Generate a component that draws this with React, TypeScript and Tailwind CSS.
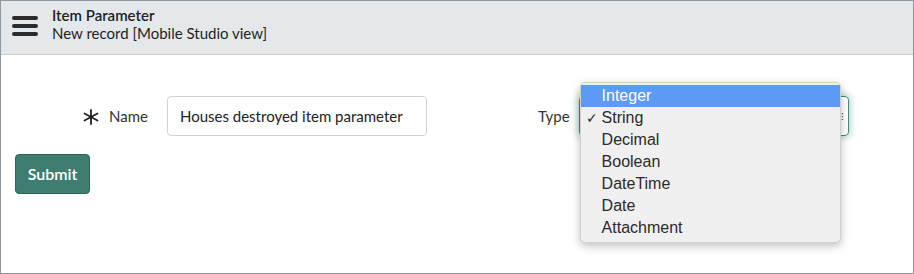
import React from "react";

const items = ["Integer", "String", "Decimal", "Boolean", "DateTime", "Date", "Attachment"];

export default function App() {
  return (
    <div className="w-[914px] h-[274px] border border-[#8f989e] bg-white flex flex-col overflow-hidden" style={{ fontFamily: "Lato, 'Open Sans', sans-serif" }}>
      <header className="h-[54px] shrink-0 bg-[#e4e8ea] border-b border-[#c9ced1] flex items-start">
        <div className="w-[26px] ml-[11px] mt-[15px] flex flex-col gap-[4px]">
          <div className="h-[4px] rounded-full bg-[#2b2b2b]" />
          <div className="h-[4px] rounded-full bg-[#2b2b2b]" />
          <div className="h-[4px] rounded-full bg-[#2b2b2b]" />
        </div>
        <div className="ml-[14px] mt-[5px] text-[#1f1f1f] leading-[18px]">
          <div className="text-[15px] font-semibold">Item Parameter</div>
          <div className="text-[15px]">New record [Mobile Studio view]</div>
        </div>
      </header>
      <main className="flex flex-col pt-[41px] pl-[14px]">
        <div className="flex items-center h-[40px]">
          <div className="w-[68px]" />
          <svg width="16" height="16" viewBox="0 0 16 16" className="mt-[2px]">
            <g stroke="#222" strokeWidth="1.8" strokeLinecap="round">
              <line x1="8" y1="1" x2="8" y2="15" />
              <line x1="1.5" y1="4.5" x2="14.5" y2="11.5" />
              <line x1="1.5" y1="11.5" x2="14.5" y2="4.5" />
            </g>
          </svg>
          <span className="ml-[10px] text-[15px] text-[#333]">Name</span>
          <div className="ml-[19px] w-[260px] h-[40px] border border-[#cfd3d6] rounded-[4px] flex items-center px-[12px] text-[15px] text-[#222] whitespace-nowrap">
            Houses destroyed item parameter
          </div>
          <span className="ml-[111px] text-[15px] text-[#333]">Type</span>
          <div className="relative ml-[9px] w-[270px] h-[40px] rounded-[4px] border border-[#3f8f7d] shadow-[0_0_6px_2px_rgba(63,143,125,0.35)] flex items-center justify-end pr-[4px]">
            <span className="text-[10px] leading-none text-[#444]">⁝</span>
            <div className="absolute left-0 top-[-15px] w-[261px] bg-[#f0f0f0] rounded-[5px] border border-[#d0d0d0] shadow-[0_3px_8px_rgba(0,0,0,0.25)] pt-[2px] pb-[3px]" style={{ fontFamily: "'Liberation Sans', Arial, sans-serif" }}>
              {items.map((it, i) => (
                <div key={it} className={`h-[22px] flex items-center text-[16px] ${i === 0 ? "bg-[#5b9af5] text-white" : "text-[#2a2a2a]"}`}>
                  <span className="w-[21px] text-right text-[14px] pr-[4px]">{i === 1 ? "✓" : ""}</span>
                  <span>{it}</span>
                </div>
              ))}
            </div>
          </div>
        </div>
        <div className="mt-[18px]">
          <button className="w-[75px] h-[40px] rounded-[4px] bg-[#3e7d6f] border border-[#2f6356] text-white text-[16px] font-semibold">
            Submit
          </button>
        </div>
      </main>
    </div>
  );
}
